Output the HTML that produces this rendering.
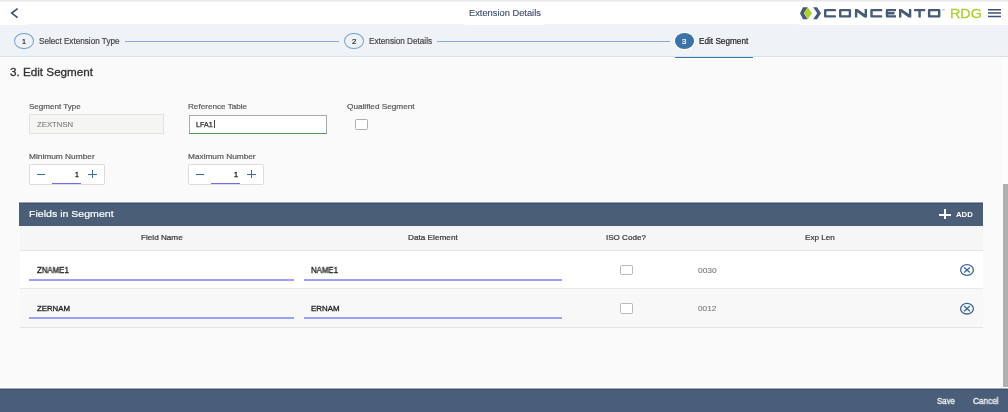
<!DOCTYPE html>
<html><head><meta charset="utf-8">
<style>
*{margin:0;padding:0;box-sizing:border-box}
html,body{width:1008px;height:412px;overflow:hidden;background:#fafafa;font-family:"Liberation Sans",sans-serif}
.a{position:absolute}
.t{position:absolute;white-space:nowrap;line-height:1;transform-origin:0 0;will-change:transform}
</style></head><body>
<!-- top strip + header -->
<div class="a" style="left:0;top:0;width:1008px;height:25px;background:#fff"></div>
<div class="a" style="left:0;top:0;width:1008px;height:1px;background:#e9e9e9"></div>
<div class="a" style="left:0;top:1px;width:1008px;height:1px;background:#f5f5f5"></div>
<!-- steps bar -->
<div class="a" style="left:0;top:24px;width:1008px;height:33px;background:#eff3f8"></div>
<div class="a" style="left:0;top:23.6px;width:27px;height:1.4px;background:#fff"></div>
<div class="a" style="left:465px;top:23.6px;width:79px;height:1.4px;background:#fff"></div>
<div class="a" style="left:799px;top:23.6px;width:209px;height:1.4px;background:#fff"></div>
<div class="a" style="left:0;top:56px;width:1008px;height:1px;background:#d6e2ee"></div>
<!-- back arrow -->
<svg class="a" style="left:0;top:0" width="40" height="25"><path d="M17.6 8.6 L11.6 13.1 L17.6 17.6" fill="none" stroke="#33486a" stroke-width="1.5"/></svg>
<!-- step circles -->
<div class="a" style="left:14.1px;top:32.7px;width:19.8px;height:16.3px;border:1.2px solid #72a0cc;border-radius:50%"></div>
<div class="a" style="left:344.2px;top:32.7px;width:19.8px;height:16.3px;border:1.2px solid #72a0cc;border-radius:50%"></div>
<div class="a" style="left:674.5px;top:32.8px;width:19.5px;height:16.1px;background:#3b72a8;border-radius:50%;box-shadow:0 0 0 1px #fff"></div>
<!-- step connector lines -->
<div class="a" style="left:125px;top:40.5px;width:214px;height:1.2px;background:#86acd2"></div>
<div class="a" style="left:437px;top:40.5px;width:232.6px;height:1.2px;background:#86acd2"></div>
<div class="a" style="left:674.5px;top:56.7px;width:78.4px;height:1.6px;background:#3f75aa"></div>
<!-- logo -->
<svg class="a" style="left:790px;top:0" width="218" height="25" viewBox="790 0 218 25">
 <g fill="#475a76">
  <polygon points="803,7.2 807.8,7.2 803.8,13.2 807.8,19.3 803,19.3 800,13.2"/>
  <polygon points="813.2,7.2 817,7.2 821,13.2 817,19.3 813.2,19.3 817.2,13.2"/>
 </g>
 <polygon fill="#afd232" points="807.8,7.2 812.1,13.2 807.8,19.3 803.8,13.2"/>
</svg>

<svg class="a" style="left:820px;top:0" width="130" height="25" viewBox="820 0 130 25">
 <g fill="none" stroke="#475a76" stroke-width="2.4" stroke-linejoin="round">
  <path d="M834.9 10.15 H825.2 V16.35 H834.9" stroke-linecap="round"/>
  <path d="M840.2 10.15 H849.9 V16.35 H840.2 Z"/>
  
  <path d="M881.2 10.15 H871.5 V16.35 H881.2" stroke-linecap="round"/>
  <path d="M896 10.15 H887 V16.35 H896 M887 13.25 H894.5"/>
  
  <path d="M914 10.15 H925.2 M919.6 10.15 V17.45"/>
  <path d="M929.1 10.15 H939.2 V16.35 H929.1 Z"/>
 </g>
 <g fill="#475a76">
  <polygon points="854.9,9.05 857.6,9.05 864.6,14.1 864.6,9.05 867,9.05 867,17.45 864.3,17.45 857.3,12.3 857.3,17.45 854.9,17.45"/>
  <polygon points="899,9.05 901.7,9.05 908.9,14.1 908.9,9.05 911.3,9.05 911.3,17.45 908.6,17.45 901.4,12.3 901.4,17.45 899,17.45"/>
 </g>
 <rect x="942" y="9.4" width="2.7" height="0.9" fill="#9aa4b4"/>
</svg>
<!-- hamburger -->
<svg class="a" style="left:980px;top:0" width="28" height="25"><g stroke="#3d5070" stroke-width="1.5"><path d="M8 9.65 H21 M8 13.1 H21 M8 16.4 H21"/></g></svg>

<!-- form inputs -->
<div class="a" style="left:29px;top:114.4px;width:134.7px;height:19.8px;background:#f5f5f3;border:1px solid #e2e2e0"></div>
<div class="a" style="left:188.7px;top:114.8px;width:138.1px;height:18.8px;background:#fff;border:1px solid #a9a9a9;border-bottom:1.2px solid #4e9a58"></div>
<div class="a" style="left:214px;top:120.4px;width:1px;height:7.3px;background:#444"></div>
<div class="a" style="left:355.2px;top:119.2px;width:12.9px;height:10.6px;background:#fff;border:1px solid #b0b0b0;border-radius:1.5px"></div>
<!-- steppers -->
<div class="a" style="left:29px;top:164.3px;width:75.6px;height:21px;background:#fff;border:1px solid #dcdcdc;border-radius:1.5px"></div>
<div class="a" style="left:188.2px;top:164.3px;width:75.5px;height:21px;background:#fff;border:1px solid #dcdcdc;border-radius:1.5px"></div>
<div class="a" style="left:36.6px;top:173.7px;width:8.5px;height:1.3px;background:#3a6ea5"></div>
<div class="a" style="left:88.2px;top:173.5px;width:8.8px;height:1.3px;background:#3a6ea5"></div>
<div class="a" style="left:91.95px;top:170.1px;width:1.3px;height:7.9px;background:#3a6ea5"></div>
<div class="a" style="left:52.2px;top:182.8px;width:28.9px;height:1.2px;background:#6b70ee"></div>
<div class="a" style="left:195.8px;top:173.7px;width:8.5px;height:1.3px;background:#3a6ea5"></div>
<div class="a" style="left:247.4px;top:173.5px;width:8.8px;height:1.3px;background:#3a6ea5"></div>
<div class="a" style="left:251.15px;top:170.1px;width:1.3px;height:7.9px;background:#3a6ea5"></div>
<div class="a" style="left:211.4px;top:182.8px;width:28.9px;height:1.2px;background:#6b70ee"></div>

<!-- toolbar -->
<div class="a" style="left:19.2px;top:201px;width:963.8px;height:1px;background:#fff"></div>
<div class="a" style="left:19.2px;top:202px;width:963.8px;height:23.6px;background:#4b5e78;border-top:1px solid #97a2b2"></div>
<div class="a" style="left:19.2px;top:203px;width:963.8px;height:1px;background:#3f516b"></div>
<div class="a" style="left:939.3px;top:213.6px;width:11.9px;height:2px;background:#fff"></div>
<div class="a" style="left:944.3px;top:209.3px;width:2px;height:10.2px;background:#fff"></div>
<!-- column header row -->
<div class="a" style="left:19.5px;top:225.6px;width:963.5px;height:25px;background:#f6f6f6;border-bottom:1px solid #e6e6e6"></div>
<!-- row 1 -->
<div class="a" style="left:19.5px;top:250.5px;width:963.5px;height:38.8px;background:#fff;border-bottom:1px solid #e8e8e8"></div>
<div class="a" style="left:19.5px;top:289.2px;width:963.5px;height:38.8px;background:#f8f8f8;border-bottom:1.5px solid #e4e4e4"></div>
<!-- underlines -->
<div class="a" style="left:29.2px;top:279px;width:264.9px;height:2px;background:#9da0f7"></div>
<div class="a" style="left:304px;top:279px;width:257.8px;height:2px;background:#9da0f7"></div>
<div class="a" style="left:29.2px;top:317px;width:264.9px;height:2px;background:#9da0f7"></div>
<div class="a" style="left:304px;top:317px;width:257.8px;height:2px;background:#9da0f7"></div>
<!-- checkboxes -->
<div class="a" style="left:620px;top:264.8px;width:12.9px;height:10.7px;background:#fff;border:1px solid #b8b8b8;border-radius:1.5px"></div>
<div class="a" style="left:620.1px;top:303.3px;width:13px;height:10.5px;background:#fff;border:1px solid #b8b8b8;border-radius:1.5px"></div>
<!-- delete icons -->
<svg class="a" style="left:955px;top:258px" width="25" height="62">
 <g fill="none" stroke="#3a6796" stroke-width="1.3">
  <ellipse cx="12" cy="12" rx="6.4" ry="5.3"/>
  <path d="M9.1 9.4 L14.9 14.6 M14.9 9.4 L9.1 14.6"/>
  <ellipse cx="12" cy="50.7" rx="6.4" ry="5.3"/>
  <path d="M9.1 48.1 L14.9 53.3 M14.9 48.1 L9.1 53.3"/>
 </g>
</svg>
<!-- scrollbar -->
<div class="a" style="left:1002px;top:57px;width:6px;height:127px;background:#fdfdfd"></div>
<div class="a" style="left:1002.5px;top:184.2px;width:5.5px;height:203px;background:#b0b0b0"></div>
<!-- footer -->
<div class="a" style="left:0;top:387px;width:1008px;height:1px;background:#fdfdfd"></div>
<div class="a" style="left:0;top:388px;width:1008px;height:24px;background:#4b5e79;border-top:1px solid #a3adba"></div>
<div class="a" style="left:0;top:389px;width:1008px;height:1px;background:#3f516b"></div>
<div class="t" style="left:468.80px;top:9px;font-size:8.430px;color:#3b4e6c;font-weight:400;transform:scaleX(1.1052);-webkit-text-stroke:0.12px #3b4e6c">Extension Details</div>
<div class="t" style="left:38.80px;top:38px;font-size:8.140px;color:#454545;font-weight:400;transform:scaleX(1.0038);-webkit-text-stroke:0.20px #454545">Select Extension Type</div>
<div class="t" style="left:368.70px;top:38px;font-size:8.140px;color:#454545;font-weight:400;transform:scaleX(1.0048);-webkit-text-stroke:0.20px #454545">Extension Details</div>
<div class="t" style="left:698.70px;top:38px;font-size:8.140px;color:#222;font-weight:400;transform:scaleX(1.0091);-webkit-text-stroke:0.20px #222">Edit Segment</div>
<div class="t" style="left:10.00px;top:67px;font-size:11.192px;color:#333;font-weight:400;transform:scaleX(1.0436);-webkit-text-stroke:0.30px #333">3. Edit Segment</div>
<div class="t" style="left:29.20px;top:103px;font-size:7.703px;color:#585858;font-weight:400;transform:scaleX(1.0478);-webkit-text-stroke:0.20px #585858">Segment Type</div>
<div class="t" style="left:188.30px;top:103px;font-size:7.703px;color:#585858;font-weight:400;transform:scaleX(1.0578);-webkit-text-stroke:0.20px #585858">Reference Table</div>
<div class="t" style="left:347.30px;top:103px;font-size:7.703px;color:#585858;font-weight:400;transform:scaleX(1.0697);-webkit-text-stroke:0.20px #585858">Qualified Segment</div>
<div class="t" style="left:29.00px;top:153px;font-size:7.558px;color:#585858;font-weight:400;transform:scaleX(1.1034);-webkit-text-stroke:0.20px #585858">Minimum Number</div>
<div class="t" style="left:188.20px;top:153px;font-size:7.558px;color:#585858;font-weight:400;transform:scaleX(1.0967);-webkit-text-stroke:0.20px #585858">Maximum Number</div>
<div class="t" style="left:36.70px;top:122px;font-size:6.831px;color:#7e7e7e;font-weight:400;transform:scaleX(1.1353);-webkit-text-stroke:0.12px #7e7e7e">ZEXTNSN</div>
<div class="t" style="left:195.90px;top:122px;font-size:6.759px;color:#2a2a2a;font-weight:400;transform:scaleX(1.0519);-webkit-text-stroke:0.25px #2a2a2a">LFA1</div>
<div class="t" style="left:74.60px;top:171px;font-size:7.413px;color:#222;font-weight:400;transform:scaleX(0.9237);-webkit-text-stroke:0.35px #222">1</div>
<div class="t" style="left:233.50px;top:171px;font-size:7.413px;color:#222;font-weight:400;transform:scaleX(0.9723);-webkit-text-stroke:0.35px #222">1</div>
<div class="t" style="left:28.90px;top:209px;font-size:9.738px;color:#fff;font-weight:400;transform:scaleX(1.0878);-webkit-text-stroke:0.18px #fff">Fields in Segment</div>
<div class="t" style="left:956.00px;top:211px;font-size:7.413px;color:#fff;font-weight:700;transform:scaleX(1.0456)">ADD</div>
<div class="t" style="left:140.90px;top:234px;font-size:7.413px;color:#3a3a3a;font-weight:400;transform:scaleX(1.1003);-webkit-text-stroke:0.22px #3a3a3a">Field Name</div>
<div class="t" style="left:407.90px;top:234px;font-size:7.413px;color:#3a3a3a;font-weight:400;transform:scaleX(1.1086);-webkit-text-stroke:0.22px #3a3a3a">Data Element</div>
<div class="t" style="left:606.40px;top:234px;font-size:7.413px;color:#3a3a3a;font-weight:400;transform:scaleX(1.0879);-webkit-text-stroke:0.22px #3a3a3a">ISO Code?</div>
<div class="t" style="left:805.30px;top:234px;font-size:7.413px;color:#3a3a3a;font-weight:400;transform:scaleX(1.0954);-webkit-text-stroke:0.22px #3a3a3a">Exp Len</div>
<div class="t" style="left:36.70px;top:267px;font-size:8.140px;color:#1e1e1e;font-weight:400;transform:scaleX(0.9635);-webkit-text-stroke:0.30px #1e1e1e">ZNAME1</div>
<div class="t" style="left:311.30px;top:267px;font-size:8.140px;color:#1e1e1e;font-weight:400;transform:scaleX(0.9665);-webkit-text-stroke:0.30px #1e1e1e">NAME1</div>
<div class="t" style="left:698.00px;top:267px;font-size:7.849px;color:#7e7e7e;font-weight:400;transform:scaleX(1.0765);-webkit-text-stroke:0.12px #7e7e7e">0030</div>
<div class="t" style="left:36.70px;top:305px;font-size:7.558px;color:#1e1e1e;font-weight:400;transform:scaleX(1.0340);-webkit-text-stroke:0.30px #1e1e1e">ZERNAM</div>
<div class="t" style="left:311.20px;top:305px;font-size:7.558px;color:#1e1e1e;font-weight:400;transform:scaleX(1.0438);-webkit-text-stroke:0.30px #1e1e1e">ERNAM</div>
<div class="t" style="left:698.30px;top:305px;font-size:7.703px;color:#7e7e7e;font-weight:400;transform:scaleX(1.0735);-webkit-text-stroke:0.12px #7e7e7e">0012</div>
<div class="t" style="left:937.00px;top:397px;font-size:8.721px;color:#eef1f5;font-weight:400;transform:scaleX(0.9002);-webkit-text-stroke:0.35px #eef1f5">Save</div>
<div class="t" style="left:973.30px;top:397px;font-size:8.430px;color:#eef1f5;font-weight:400;transform:scaleX(0.9756);-webkit-text-stroke:0.35px #eef1f5">Cancel</div>
<div class="t" style="left:22.20px;top:39px;font-size:7.122px;color:#2a2a2a;font-weight:400;transform:scaleX(1.0120);-webkit-text-stroke:0.20px #2a2a2a">1</div>
<div class="t" style="left:352.00px;top:39px;font-size:7.122px;color:#2a2a2a;font-weight:400;transform:scaleX(1.1131);-webkit-text-stroke:0.20px #2a2a2a">2</div>
<div class="t" style="left:681.90px;top:39px;font-size:7.122px;color:#fff;font-weight:400;transform:scaleX(1.1131);-webkit-text-stroke:0.20px #fff">3</div>
<div class="t" style="left:950.00px;top:7px;font-size:13.227px;color:#abcf34;font-weight:400;transform:scaleX(1.0852);-webkit-text-stroke:0.30px #abcf34">RDG</div>
</body></html>
